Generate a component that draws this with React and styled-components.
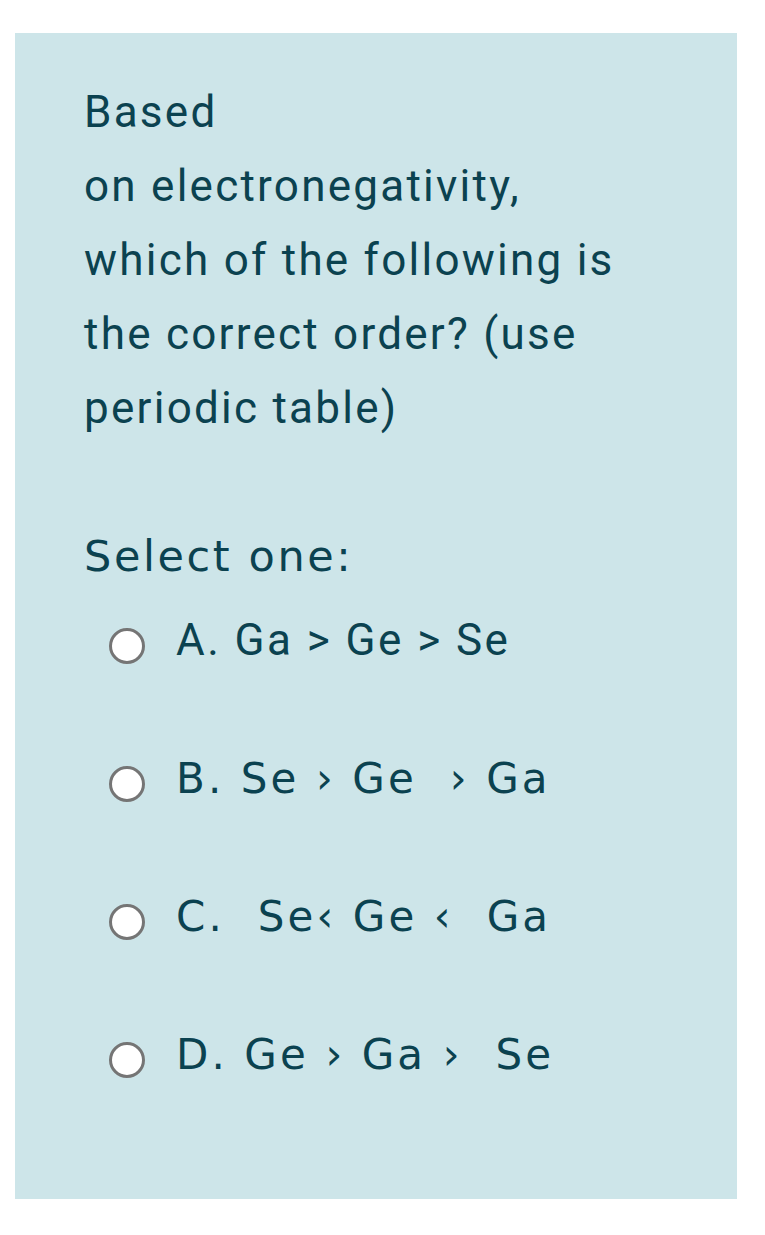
import React from "react";
import styled, { createGlobalStyle } from "styled-components";

const Global = createGlobalStyle`
  html, body { margin: 0; padding: 0; background: #ffffff; }
  body { width: 765px; height: 1235px; overflow: hidden; }
`;

const Page = styled.div`
  padding: 33px 28px 36px 15px;
`;

const Panel = styled.section`
  box-sizing: border-box;
  width: 722px;
  height: 1166px;
  background: #cde5e9;
  padding: 42px 30px 0 69px;
  color: #0b4250;
`;

const Question = styled.div`
  font-family: Roboto, "Liberation Sans", sans-serif;
  font-size: 44px;
  letter-spacing: 2.25px;
  line-height: 74px;
`;

const Prompt = styled.div`
  margin-top: 74px;
  font-family: "DejaVu Sans", Roboto, sans-serif;
  font-size: 43px;
  letter-spacing: 2.6px;
  line-height: 74px;
`;

const Options = styled.div`
  display: flex;
  flex-direction: column;
  gap: 64px;
  margin-top: 10px;
  padding-left: 25px;
`;

const Option = styled.label`
  display: flex;
  align-items: center;
  gap: 31px;
  height: 74px;
  font-family: ${(p) => (p.$geo ? `"DejaVu Sans", Roboto, sans-serif` : `Roboto, "Liberation Sans", sans-serif`)};
  font-size: ${(p) => (p.$geo ? "42px" : "44px")};
  letter-spacing: ${(p) => (p.$geo ? "3.1px" : "2.45px")};
  white-space: pre;
`;

const Radio = styled.span`
  box-sizing: border-box;
  flex: none;
  width: 36px;
  height: 36px;
  border-radius: 50%;
  border: 3px solid #757575;
  background: #ffffff;
  margin-top: 12px;
`;

const options = [
  { text: "A. Ga > Ge > Se", geo: false },
  { text: "B. Se \u203A Ge  \u203A Ga", geo: true },
  { text: "C.  Se\u2039 Ge \u2039  Ga", geo: true },
  { text: "D. Ge \u203A Ga \u203A  Se", geo: true },
];

export default function App() {
  return (
    <>
      <Global />
      <Page>
        <Panel>
          <Question>
            Based
            <br />
            on electronegativity,
            <br />
            which of the following is
            <br />
            the correct order? (use
            <br />
            periodic table)
          </Question>
          <Prompt>Select one:</Prompt>
          <Options>
            {options.map((o) => (
              <Option key={o.text} $geo={o.geo}>
                <Radio />
                <span>{o.text}</span>
              </Option>
            ))}
          </Options>
        </Panel>
      </Page>
    </>
  );
}
